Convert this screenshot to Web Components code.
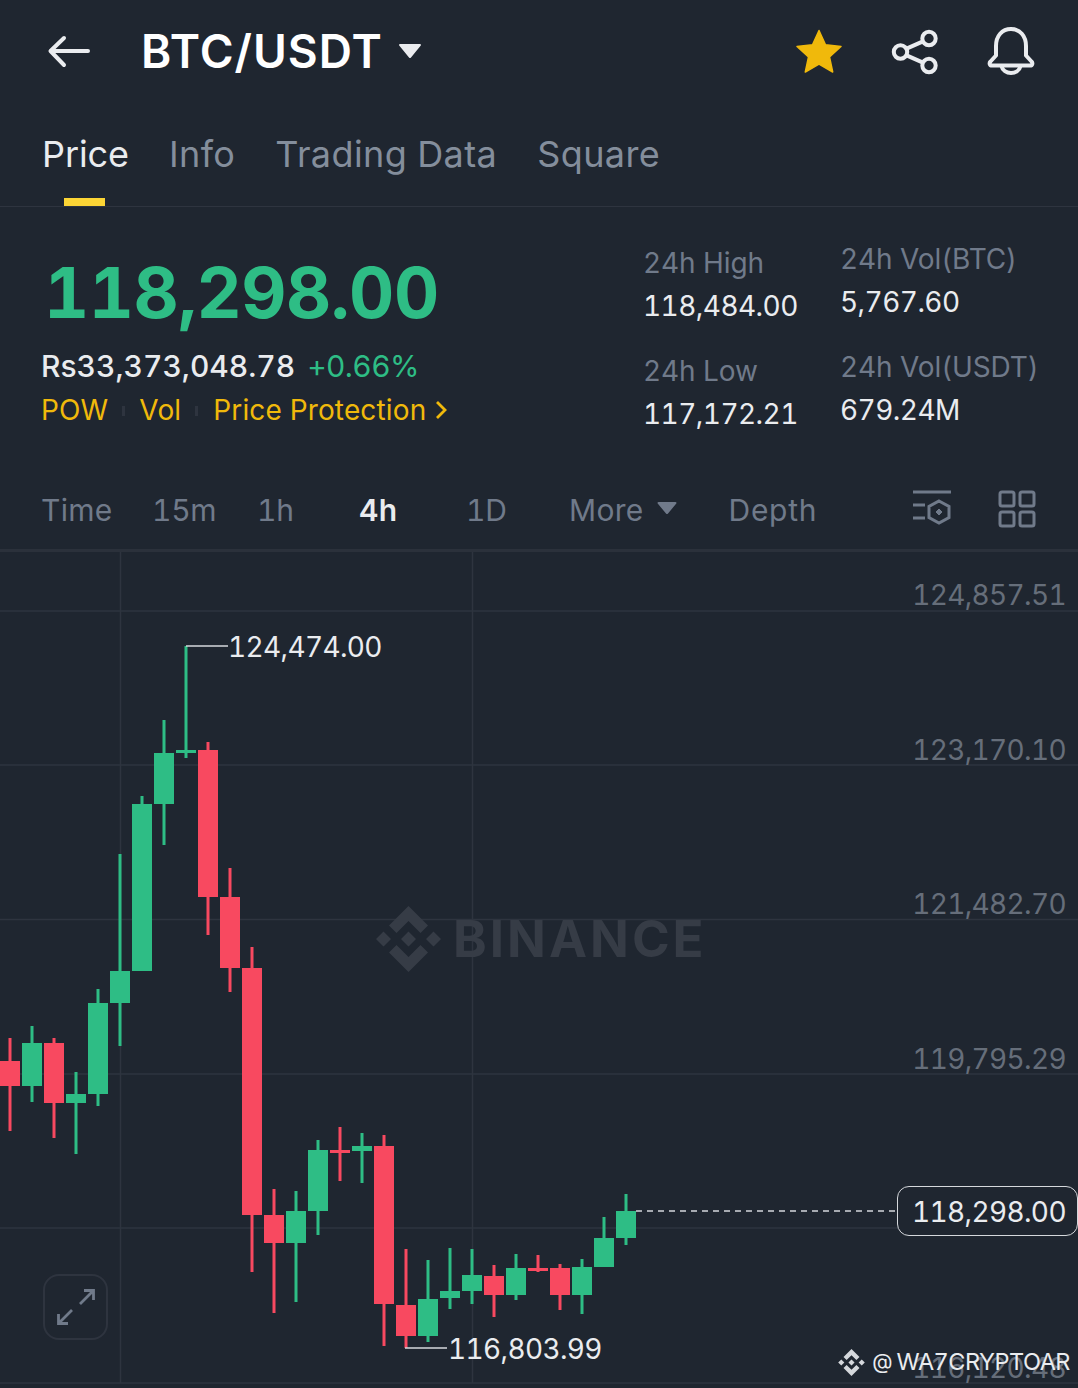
<!DOCTYPE html>
<html>
<head>
<meta charset="utf-8">
<style>
    html, body { margin: 0; background: #1f2630; }
    body { width: 1078px; height: 1388px; overflow: hidden; font-family: Inter, "Liberation Sans", sans-serif; font-variant-numeric: tabular-nums; }
</style>
</head>
<body>
<app-header pair="BTC/USDT"></app-header>
<tab-bar>
    <span class="on">Price</span>
    <span>Info</span>
    <span>Trading Data</span>
    <span>Square</span>
</tab-bar>
<price-panel></price-panel>
<interval-bar></interval-bar>
<candle-chart></candle-chart>

<script>
class AppHeader extends HTMLElement {
    connectedCallback() {
        this.attachShadow({ mode: "open" }).innerHTML = `
            <style>
                :host { display: flex; align-items: center; height: 102px; padding: 0 43px 0 47px; color: #fff; }
                .title { font-size: 46px; font-weight: 600; letter-spacing: 1px; margin-left: 49px; }
                .caret { margin-left: 15px; }
                .right { display: flex; gap: 41px; margin-left: auto; align-items: center; }
                svg { display: block; }
            </style>
            <svg width="45" height="34" viewBox="0 0 45 34" fill="none" stroke="#eaecef" stroke-width="4" stroke-linecap="round" stroke-linejoin="round">
                <path d="M41 17H4M17 4L3.500 17 17 31"/>
            </svg>
            <span class="title">${this.getAttribute("pair")}</span>
            <svg class="caret" width="24" height="16" viewBox="0 0 24 16"><path d="M2 1h20a1 1 0 0 1 .8 1.600L13 14.500a1.300 1.300 0 0 1-2 0L1.200 2.600A1 1 0 0 1 2 1z" fill="#eaecef"/></svg>
            <div class="right">
                <svg style="margin-right:-3px" width="56" height="50" viewBox="0 0 56 50"><path d="M28 4.500l6.500 14.200 15.500 1.800-11.500 10.400 3.200 15.100L28 38l-13.700 8 3.200-15.100L6 20.500l15.500-1.800z" fill="#f0b90b" stroke="#f0b90b" stroke-width="1.500" stroke-linejoin="round"/></svg>
                <svg style="margin-right:5px" width="56" height="50" viewBox="0 0 56 50" fill="none" stroke="#eaecef" stroke-width="4">
                    <circle cx="15.500" cy="26" r="6.700"/><circle cx="44" cy="12.500" r="6.700"/><circle cx="44" cy="39.500" r="6.700"/>
                    <path d="M21 22.800l17-7.500M21 29.200l17 7.500"/>
                </svg>
                <svg width="48" height="50" viewBox="0 0 48 50" fill="none" stroke="#eaecef" stroke-width="4" stroke-linejoin="round">
                    <path d="M5 39.500c-2.500 0-3-2.500-1.500-4L9 29.500V20C9 10 15 3 24 3s15 7 15 17v9.500l5.500 6c1.500 1.500 1 4-1.500 4z"/>
                    <path d="M14.500 40c1 4.500 5 7 9.500 7s8.500-2.500 9.500-7"/>
                </svg>
            </div>`;
    }
}

class TabBar extends HTMLElement {
    connectedCallback() {
        this.attachShadow({ mode: "open" }).innerHTML = `
            <style>
                :host { display: flex; gap: 40px; height: 105px; box-sizing: border-box; padding: 30px 0 0 42px;
                    border-bottom: 1px solid #2e343f; font-size: 36px; letter-spacing: 0.4px; color: #848e9c; position: relative; }
                ::slotted(.on) { color: #eaecef; font-weight: 400; letter-spacing: -0.1px; }
                .ink { position: absolute; left: 64px; bottom: 0; width: 41px; height: 8px; background: #fcd535; }
            </style>
            <slot></slot><i class="ink"></i>`;
    }
}

class StatCell extends HTMLElement {
    connectedCallback() {
        this.attachShadow({ mode: "open" }).innerHTML = `
            <style>
                :host { display: block; font-size: 28px; line-height: 43px; color: #eaecef; white-space: nowrap; }
                .k { color: #707a8a; letter-spacing: -0.1px; }
                .v { letter-spacing: -0.55px; }
            </style>
            <div class="k">${this.getAttribute("label")}</div>
            <div class="v">${this.getAttribute("value")}</div>`;
    }
}

class PricePanel extends HTMLElement {
    connectedCallback() {
        this.attachShadow({ mode: "open" }).innerHTML = `
            <style>
                :host { display: flex; height: 241px; box-sizing: border-box; padding-left: 42px; }
                .main { flex: 0 0 601px; }
                .big { font-size: 70px; font-weight: 700; color: #2ebd85; line-height: 84px; margin: 44px 0 0 2px; letter-spacing: -0.5px; }
                .fiat { display: flex; gap: 12px; font-size: 30px; line-height: 40px; color: #eaecef; font-weight: 500; margin-top: 11px; margin-left: -1px; }
                .fiat b { font-weight: 400; color: #2ebd85; letter-spacing: -0.6px; }
                .tags { display: flex; align-items: center; font-size: 28px; letter-spacing: 0.15px; line-height: 40px; color: #f0b90b; margin: 4px 0 0 -1px; }
                .sep { width: 3px; height: 10px; background: #2e343f; margin: 2px 14px 0; }
                .sep + span + .sep { margin-right: 15px; }
                .col { display: flex; flex-direction: column; gap: 22px; }
                .a { flex: 0 0 197px; margin-top: 35px; }
                .b { margin-top: 31px; }
            </style>
            <div class="main">
                <div class="big">118,298.00</div>
                <div class="fiat"><span>Rs33,373,048.78</span><b>+0.66%</b></div>
                <div class="tags"><span>POW</span><i class="sep"></i><span>Vol</span><i class="sep"></i><span>Price Protection</span>
                    <svg style="margin-left:9px" width="12" height="20" viewBox="0 0 12 20" fill="none" stroke="#f0b90b" stroke-width="2.800"><path d="M2 2l8 8-8 8"/></svg>
                </div>
            </div>
            <div class="col a">
                <stat-cell label="24h High" value="118,484.00"></stat-cell>
                <stat-cell label="24h Low" value="117,172.21"></stat-cell>
            </div>
            <div class="col b">
                <stat-cell label="24h Vol(BTC)" value="5,767.60"></stat-cell>
                <stat-cell label="24h Vol(USDT)" value="679.24M"></stat-cell>
            </div>`;
    }
}

class IntervalBar extends HTMLElement {
    connectedCallback() {
        this.attachShadow({ mode: "open" }).innerHTML = `
            <style>
                :host { display: flex; align-items: center; height: 104px; box-sizing: border-box; padding: 38px 42px 16px 41px;
                    border-bottom: 3px solid #2b313b; font-size: 30px; letter-spacing: 0.3px; color: #707a8a; }
                span { white-space: nowrap; }
                .on { color: #eaecef; font-weight: 600; }
                .n { letter-spacing: -0.3px; }
                svg { display: block; }
            </style>
            <span style="width:111px">Time</span>
            <span class="n" style="width:105px">15m</span>
            <span class="n" style="width:102px">1h</span>
            <span class="on" style="width:107px">4h</span>
            <span class="n" style="width:103px">1D</span>
            <span>More</span>
            <svg style="margin:-4px 52px 0 13px" width="20" height="14" viewBox="0 0 20 14"><path d="M1.500 1h17a1 1 0 0 1 .8 1.600L11 12.500a1.300 1.300 0 0 1-2 0L.700 2.600A1 1 0 0 1 1.500 1z" fill="#707a8a"/></svg>
            <span style="letter-spacing:0.7px">Depth</span>
            <svg style="margin:-2px 0 0 auto" width="40" height="38" viewBox="0 0 40 38" fill="none" stroke="#707a8a" stroke-width="3">
                <path d="M1 2h38M1 15h12M1 28h12"/>
                <path d="M27 11l10 5.500v11L27 33l-10-5.500v-11z"/>
                <path d="M27 19l3 3-3 3-3-3z" fill="#707a8a" stroke-width="1"/>
            </svg>
            <svg style="margin:-2px 0 0 46px" width="38" height="38" viewBox="0 0 38 38" fill="none" stroke="#707a8a" stroke-width="3">
                <rect x="2" y="2" width="14" height="14" rx="2"/><rect x="22" y="2" width="14" height="14" rx="2"/>
                <rect x="2" y="22" width="14" height="14" rx="2"/><rect x="22" y="22" width="14" height="14" rx="2"/>
            </svg>`;
    }
}

// x, wick top, wick bottom, body top, body bottom, up?
const CANDLES = [
    [10, 1038, 1131, 1061, 1086, 0], [32, 1026, 1102, 1043, 1086, 1], [54, 1038, 1138, 1043, 1103, 0],
    [76, 1072, 1154, 1094, 1103, 1], [98, 989, 1106, 1003, 1094, 1], [120, 854, 1046, 971, 1003, 1],
    [142, 796, 971, 804, 971, 1], [164, 720, 845, 753, 804, 1], [186, 646, 758, 750, 753, 1],
    [208, 742, 935, 750, 897, 0], [230, 868, 992, 897, 968, 0], [252, 947, 1272, 968, 1215, 0],
    [274, 1189, 1313, 1215, 1243, 0], [296, 1191, 1302, 1211, 1243, 1], [318, 1140, 1235, 1150, 1211, 1],
    [340, 1127, 1181, 1150, 1153, 0], [362, 1133, 1183, 1146, 1151, 1], [384, 1135, 1346, 1146, 1304, 0],
    [406, 1249, 1348, 1305, 1336, 0], [428, 1260, 1342, 1299, 1336, 1], [450, 1248, 1309, 1291, 1298, 1],
    [472, 1249, 1304, 1275, 1291, 1], [494, 1265, 1317, 1276, 1295, 0], [516, 1254, 1300, 1268, 1295, 1],
    [538, 1255, 1272, 1268, 1271, 0], [560, 1264, 1310, 1268, 1295, 0], [582, 1259, 1314, 1267, 1295, 1],
    [604, 1217, 1267, 1238, 1267, 1], [626, 1194, 1245, 1211, 1238, 1],
];
const TOP = 552; // chart's y on the page
const BNB = "M32.500 0L52 19.500l-7.500 7.500-12-12-12 12L13 19.500zM32.500 66L13 46.500 20.500 39l12 12 12-12 7.500 7.500zM32.500 25.500L40 33l-7.500 7.500L25 33zM7.500 25.500L15 33l-7.500 7.500L0 33zM57.500 25.500L65 33l-7.500 7.500L50 33z";

class CandleChart extends HTMLElement {
    connectedCallback() {
        const y = v => v - TOP;
        const lines = [611, 765, 919.5, 1074, 1228, 1383].map(v =>
            `<path d="M0 ${y(v)}H1078" stroke="#2e343f" stroke-width="1.500"/>`).join("");
        const candles = CANDLES.map(([x, wt, wb, bt, bb, up]) => {
            const c = up ? "#2ebd85" : "#f84960";
            return `<rect x="${x - 1.5}" y="${y(wt)}" width="3" height="${wb - wt}" fill="${c}"/>
                    <rect x="${x - 10}" y="${y(bt)}" width="20" height="${bb - bt}" fill="${c}"/>`;
        }).join("");
        const axis = [[595, "124,857.51"], [750, "123,170.10"], [904, "121,482.70"], [1059, "119,795.29"], [1368, "116,120.48"]]
            .map(([t, s]) => `<span class="axis" style="top:${y(t) - 18}px">${s}</span>`).join("");
        this.attachShadow({ mode: "open" }).innerHTML = `
            <style>
                :host { display: block; position: relative; height: 836px; font-size: 28px; letter-spacing: -0.65px; }
                .plot { position: absolute; left: 0; top: 0; display: block; }
                .axis { position: absolute; right: 12px; line-height: 36px; color: #666e7a; }
                .mark { position: absolute; line-height: 36px; color: #eaecef; }
                .last { position: absolute; left: 897px; top: ${1186 - TOP}px; width: 181px; height: 50px; box-sizing: border-box;
                    border: 1.500px solid #d5d8dc; border-radius: 12px; background: #1f2630; color: #eaecef;
                    display: flex; align-items: center; justify-content: center; padding: 2px 0 0 3px; }
                .wm { position: absolute; left: 376px; top: ${906 - TOP}px; display: flex; align-items: center; gap: 12px;
                    font-size: 51px; font-weight: 700; color: #363c46; letter-spacing: 3px; line-height: 66px; }
                .full { position: absolute; left: 43px; top: ${1274 - TOP}px; width: 65px; height: 66px; box-sizing: border-box;
                    border: 2.500px solid #2e343f; border-radius: 16px; display: flex; align-items: center; justify-content: center; }
                .tag { position: absolute; right: 8px; top: ${1344 - TOP}px; display: flex; align-items: center; gap: 4px;
                    font-size: 23.500px; letter-spacing: -0.5px; line-height: 36px; color: #eaecef; }
                .tag .at { font-size: 21px; margin-left: 3px; letter-spacing: 0; }
            </style>
            <svg class="plot" width="1078" height="836" viewBox="0 0 1078 836">
                ${lines}
                <path d="M120.500 0V831M472.500 0V831" stroke="#2e343f" stroke-width="1.500"/>
                ${candles}
                <path d="M186 ${y(646)}H228M405 ${y(1348)}H447" stroke="#d5d8dc" stroke-width="1.500" fill="none"/>
                <path d="M636 ${y(1211)}H897" stroke="#d5d8dc" stroke-width="1.500" stroke-dasharray="6 5"/>
            </svg>
            <div class="wm">
                <svg width="65" height="66" viewBox="0 0 65 66"><path fill="#363c46" d="${BNB}"/></svg>
                <span>BINANCE</span>
            </div>
            ${axis}
            <span class="mark" style="left:228px;top:${647 - TOP - 18}px">124,474.00</span>
            <span class="mark" style="left:448px;top:${1349 - TOP - 18}px">116,803.99</span>
            <div class="last">118,298.00</div>
            <div class="full">
                <svg width="40" height="40" viewBox="0 0 40 40" fill="none" stroke="#707a8a" stroke-width="2.800">
                    <path d="M24 17L37 4M28 3.500h9.500V13M16 23L3 36M12 36.500H2.500V27"/>
                </svg>
            </div>
            <div class="tag">
                <svg width="27" height="27" viewBox="0 0 65 66"><path fill="#d5d8dc" d="${BNB}"/></svg>
                <span class="at">@</span>
                <span>WA7CRYPTOAR</span>
            </div>`;
    }
}

customElements.define("app-header", AppHeader);
customElements.define("tab-bar", TabBar);
customElements.define("stat-cell", StatCell);
customElements.define("price-panel", PricePanel);
customElements.define("interval-bar", IntervalBar);
customElements.define("candle-chart", CandleChart);
</script>
</body>
</html>
